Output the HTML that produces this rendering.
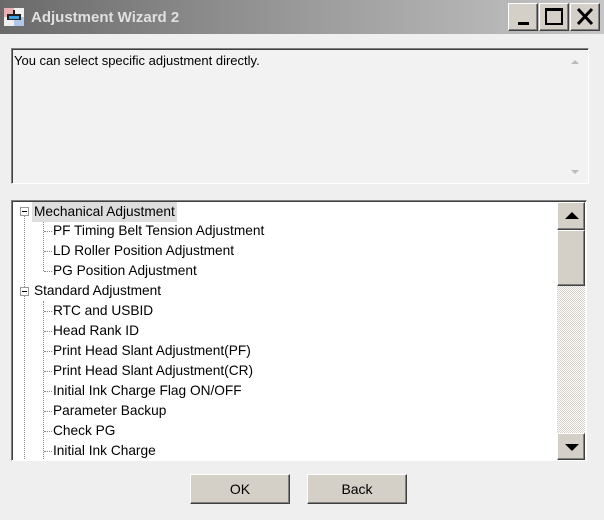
<!DOCTYPE html><html><head><style>
*{margin:0;padding:0;box-sizing:border-box}
body{width:604px;height:520px;background:#efefef;font-family:"Liberation Sans",sans-serif;position:relative;overflow:hidden}
.tb{position:absolute;left:0;top:0;width:604px;height:34px;background:linear-gradient(90deg,#6a6a6a,#9a9a9a 50%,#c6c6c6)}
.tb .t{position:absolute;left:31px;top:9px;color:#e0e0e0;font-weight:bold;font-size:15px}
.wb{position:absolute;top:3px;width:30px;height:28px;background:#d4d0c8;border:1px solid;border-color:#fff #404040 #404040 #fff;box-shadow:inset -1px -1px #808080}
.box{position:absolute;background:#fff;border:1px solid;border-color:#808080 #fff #fff #808080;box-shadow:inset 1px 1px #404040}
.r{position:absolute;font-size:13.7px;color:#000;height:20px;line-height:20px;white-space:nowrap}
.h{position:absolute;border-top:1px dotted #888;width:8px}
.v{position:absolute;border-left:1px dotted #888}
.ex{position:absolute;width:9px;height:9px;border:1px solid #999;background:#fff}
.ex:after{content:"";position:absolute;left:1px;top:3px;width:5px;height:1px;background:#000}
.btn{position:absolute;top:474px;width:100px;height:30px;background:#d4d0c8;border:1px solid;border-color:#fff #404040 #404040 #fff;box-shadow:inset -1px -1px #808080;font-size:14px;text-align:center;line-height:28px}
.sb{position:absolute;background:#d4d0c8;border:1px solid;border-color:#fff #404040 #404040 #fff;box-shadow:inset -1px -1px #808080}
</style></head><body>
<div class="tb">
<svg style="position:absolute;left:4px;top:8px" width="20" height="18"><rect x="0" y="0" width="20" height="18" fill="#f0f0f0"/><rect x="0" y="0" width="10" height="9" fill="#e8b0b0"/><rect x="10" y="9" width="10" height="9" fill="#b0c8e8"/><rect x="3" y="6" width="14" height="6" fill="#222"/><rect x="5" y="8" width="10" height="3" fill="#3aa0e0"/><rect x="9" y="2" width="2" height="4" fill="#222"/></svg>
<div class="t">Adjustment Wizard 2</div>
<div class="wb" style="left:508px"><div style="position:absolute;left:9px;top:18px;width:11px;height:3px;background:#000"></div></div>
<div class="wb" style="left:539px"><div style="position:absolute;left:5px;top:4px;width:18px;height:17px;border:2px solid #000;border-top-width:3px"></div></div>
<div class="wb" style="left:570px"><svg width="28" height="26"><path d="M7 5L21 20M21 5L7 20" stroke="#000" stroke-width="3"/></svg></div>
</div>
<div class="box" style="left:11px;top:48px;width:578px;height:136px;background:#f2f2f2">
<div style="position:absolute;left:2px;top:4px;font-size:13px">You can select specific adjustment directly.</div>
<div style="position:absolute;left:559px;top:11px;border:4px solid transparent;border-bottom:4px solid #bbb;border-top:0"></div>
<div style="position:absolute;left:559px;top:121px;border:4px solid transparent;border-top:4px solid #bbb;border-bottom:0"></div>
</div>
<div class="box" style="left:11px;top:200px;width:576px;height:261px;overflow:hidden">
<div class="v" style="left:12px;top:15px;height:245px"></div>
<div class="v" style="left:31px;top:20px;height:50px"></div>
<div class="v" style="left:31px;top:100px;height:160px"></div>
<div class="ex" style="left:8px;top:6px"></div>
<div class="r" style="left:20px;top:1px;background:#ddd;padding:0 2px">Mechanical Adjustment</div>
<div class="h" style="left:32px;top:30px"></div><div class="r" style="left:41px;top:20px">PF Timing Belt Tension Adjustment</div>
<div class="h" style="left:32px;top:50px"></div><div class="r" style="left:41px;top:40px">LD Roller Position Adjustment</div>
<div class="h" style="left:32px;top:70px"></div><div class="r" style="left:41px;top:60px">PG Position Adjustment</div>
<div class="ex" style="left:8px;top:86px"></div>
<div class="r" style="left:22px;top:80px">Standard Adjustment</div>
<div class="h" style="left:32px;top:110px"></div><div class="r" style="left:41px;top:100px">RTC and USBID</div>
<div class="h" style="left:32px;top:130px"></div><div class="r" style="left:41px;top:120px">Head Rank ID</div>
<div class="h" style="left:32px;top:150px"></div><div class="r" style="left:41px;top:140px">Print Head Slant Adjustment(PF)</div>
<div class="h" style="left:32px;top:170px"></div><div class="r" style="left:41px;top:160px">Print Head Slant Adjustment(CR)</div>
<div class="h" style="left:32px;top:190px"></div><div class="r" style="left:41px;top:180px">Initial Ink Charge Flag ON/OFF</div>
<div class="h" style="left:32px;top:210px"></div><div class="r" style="left:41px;top:200px">Parameter Backup</div>
<div class="h" style="left:32px;top:230px"></div><div class="r" style="left:41px;top:220px">Check PG</div>
<div class="h" style="left:32px;top:250px"></div><div class="r" style="left:41px;top:240px">Initial Ink Charge</div>
<div style="position:absolute;left:545px;top:1px;width:28px;height:258px;background:repeating-conic-gradient(#d4d0c8 0 25%,#fff 0 50%) 0 0/2px 2px"></div>
<div class="sb" style="left:545px;top:1px;width:28px;height:28px"><div style="position:absolute;left:7px;top:9px;border:7px solid transparent;border-bottom:7px solid #000;border-top:0"></div></div>
<div class="sb" style="left:545px;top:29px;width:28px;height:56px"></div>
<div class="sb" style="left:545px;top:232px;width:28px;height:27px"><div style="position:absolute;left:7px;top:10px;border:7px solid transparent;border-top:7px solid #000;border-bottom:0"></div></div>
</div>
<div class="btn" style="left:190px">OK</div>
<div class="btn" style="left:307px">Back</div>
</body></html>
